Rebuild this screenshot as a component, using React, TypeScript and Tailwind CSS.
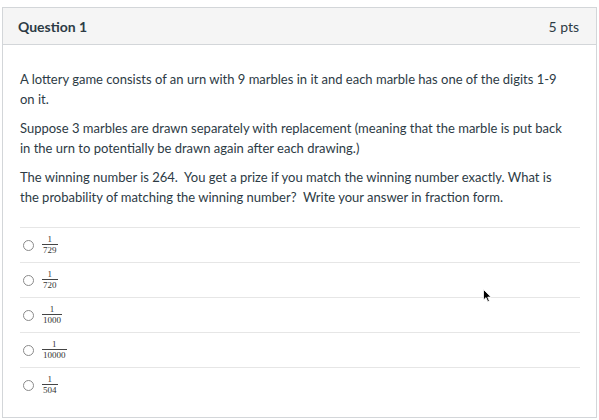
import React from "react";

const options = ["729", "720", "1000", "10000", "504"];

function Fraction({ d }: { d: string }) {
  return (
    <span className="flex flex-col items-center text-[9px] leading-[8px] text-[#333] font-['Liberation_Serif','DejaVu_Serif',serif]">
      <span className="px-[1px]">1</span>
      <span className="h-px w-full bg-[#444] my-[1px]"></span>
      <span className="px-[1px]">{d}</span>
    </span>
  );
}

export default function App() {
  return (
    <div className="w-[599px] h-[420px] bg-white relative font-['Lato','Noto_Sans',sans-serif] text-[#2d3b45]">
      <div className="absolute left-[2px] top-[7px] w-[595px] h-[411px] border border-[#d3d6d9] flex flex-col">
        <div className="h-[37px] bg-[#f5f5f5] border-b border-[#d3d6d9] flex items-center justify-between pl-[15px] pr-[17px]">
          <span className="text-[14px] font-bold">Question 1</span>
          <span className="text-[14px] text-[#2d3b45]">5 pts</span>
        </div>
        <div className="px-[17px] pt-[24px] text-[13px] leading-[20px]">
          <div className="pr-[10px]">
            <p>
              A lottery game consists of an urn with 9 marbles in it and each marble has one of the digits 1-9 on it.
            </p>
            <p className="mt-[9px]">
              Suppose 3 marbles are drawn separately with replacement (meaning that the marble is put back in the urn to potentially be drawn again after each drawing.)
            </p>
            <p className="mt-[9px]">
              The winning number is 264.&nbsp; You get a prize if you match the winning number exactly. What is the probability of matching the winning number?&nbsp; Write your answer in fraction form.
            </p>
          </div>
          <div className="mt-[20px] w-[560px]">
            {options.map((d) => (
              <div key={d} className="h-[35px] border-t border-[#e6e6e6] flex items-center pl-[3px]">
                <span className="w-[11px] h-[11px] rounded-full border border-[#8a8a8a] bg-white"></span>
                <span className="ml-[8px] mb-[1px] flex">
                  <Fraction d={d} />
                </span>
              </div>
            ))}
          </div>
        </div>
      </div>
      <svg className="absolute left-[483px] top-[289px]" width="9" height="14" viewBox="0 0 9 14">
        <path d="M0.5 0.5 L0.5 11 L3 8.6 L4.8 12.8 L6.4 12.1 L4.7 8.1 L8 8.1 Z" fill="#000" stroke="#fff" strokeWidth="0.8" />
      </svg>
    </div>
  );
}
